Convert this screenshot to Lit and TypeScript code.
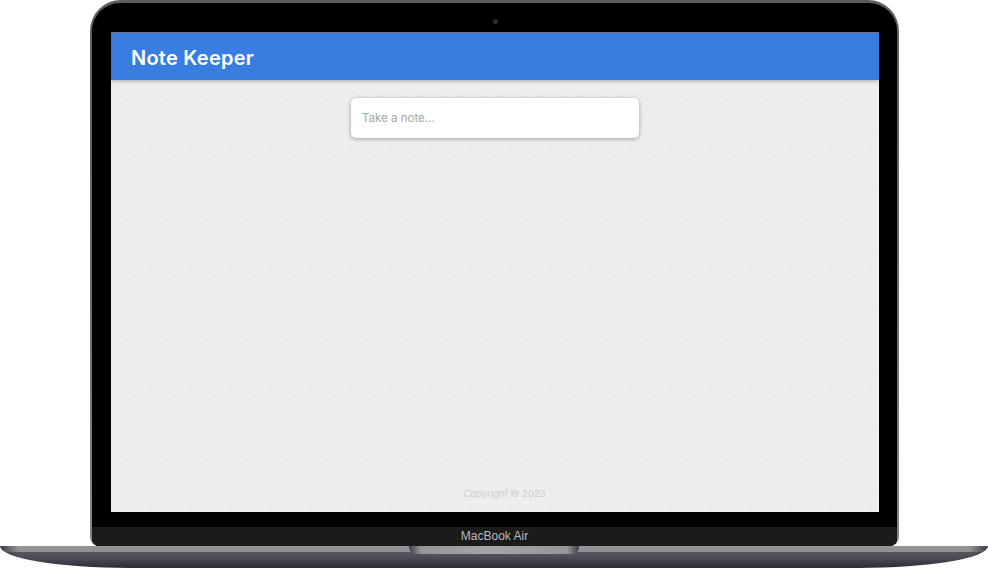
import { LitElement, html, css, unsafeCSS } from "lit";
import { customElement } from "lit/decorators.js";

const tile = `<svg xmlns='http://www.w3.org/2000/svg' width='40' height='60'><g fill='none' stroke-width='1'><path stroke='#e8e8e8' d='M20 3.5L40 10.5L20 18L0 10.5ZM0 33.5L-20 40.5L0 48L20 40.5ZM40 33.5L20 40.5L40 48L60 40.5ZM20 63.5L0 70.5M20 63.5L40 70.5'/><path stroke='#e9e9e9' d='M.5 10.5V33.5M.5 48V70M20.5 18V63.5M40.5 10.5V33.5M40.5 48V70'/></g></svg>`;

@customElement("app-root")
export class AppRoot extends LitElement {
  static styles = css`
    :host {
      display: block;
      width: 988px;
      height: 568px;
      background: #fff;
      overflow: hidden;
    }
    .laptop {
      display: flex;
      flex-direction: column;
      height: 568px;
    }
    .lid {
      box-sizing: border-box;
      width: 809px;
      height: 546px;
      margin: 0 auto 0 90px;
      padding: 3px 2px 0;
      border-radius: 31px 31px 9px 9px;
      background: linear-gradient(180deg, #5c5c62 0%, #6a6a70 50%, #85858a 100%);
      display: flex;
    }
    .bezel {
      flex: 1;
      background: #000;
      border-radius: 28px 28px 7px 7px;
      display: flex;
      flex-direction: column;
      overflow: hidden;
    }
    .cam-row {
      height: 29px;
      margin: 0 18px 0 19px;
      display: flex;
      align-items: center;
      justify-content: center;
      padding-top: 8px;
      box-sizing: border-box;
    }
    .cam {
      width: 5px;
      height: 5px;
      border-radius: 50%;
      background: #2a2a2c;
    }
    .screen {
      height: 480px;
      margin: 0 18px 0 19px;
      display: flex;
      flex-direction: column;
      background-color: #eeeeee;
      background-image: url("data:image/svg+xml,${unsafeCSS(encodeURIComponent(tile))}");
      background-position: 19px -3px;
    }
    .header {
      height: 48px;
      box-sizing: border-box;
      border-top: 1px solid #6b7484;
      background: #3a7de0;
      box-shadow: 0 1px 4px rgba(0, 0, 0, 0.3);
      display: flex;
      align-items: center;
      padding: 2px 0 0 20px;
    }
    .title {
      font-family: "Inter", sans-serif;
      font-size: 20px;
      font-weight: 600;
      letter-spacing: 0.25px;
      color: #fff;
    }
    .main {
      flex: 1;
      padding-top: 18px;
      display: flex;
      justify-content: center;
      align-items: flex-start;
    }
    .note {
      width: 288px;
      height: 40px;
      box-sizing: border-box;
      padding: 0 11px;
      display: flex;
      align-items: center;
      background: #fff;
      border-radius: 5px;
      box-shadow: 0 1px 4px rgba(0, 0, 0, 0.35);
      font-family: "Inter", sans-serif;
      font-size: 11.5px;
      color: #a3a3a3;
    }
    .footer {
      height: 37px;
      padding-left: 19px;
      text-align: center;
      font-family: "Inter", sans-serif;
      font-size: 9.6px;
      color: #cdcdcd;
      line-height: 38px;
    }
    .chin {
      height: 15px;
    }
    .label {
      height: 19px;
      background: #1b1b1c;
      color: #b9b9bb;
      font-family: "Liberation Sans", sans-serif;
      font-size: 12px;
      line-height: 19px;
      text-align: center;
    }
    .base {
      height: 22px;
      border-radius: 0 0 130px 130px / 0 0 22px 22px;
      background:
        linear-gradient(90deg, #3a3b42 0, rgba(58, 59, 66, 0) 18px, rgba(58, 59, 66, 0) 970px, #3a3b42 988px),
        linear-gradient(
          180deg,
          #95959a 0%,
          #8e8e93 26%,
          #55565f 29%,
          #4a4b55 55%,
          #2b2c38 100%
        );
      display: flex;
      justify-content: center;
    }
    .notch {
      width: 170px;
      height: 8px;
      border-radius: 0 0 7px 7px;
      background: linear-gradient(
        90deg,
        #3d3e45 0%,
        #96969a 7%,
        #a6a6aa 50%,
        #96969a 93%,
        #3d3e45 100%
      );
    }
  `;

  render() {
    return html`
      <div class="laptop">
        <div class="lid">
          <div class="bezel">
            <div class="cam-row"><div class="cam"></div></div>
            <div class="screen">
              <div class="header"><div class="title">Note Keeper</div></div>
              <div class="main"><div class="note">Take a note...</div></div>
              <div class="footer">Copyright © 2023</div>
            </div>
            <div class="chin"></div>
            <div class="label">MacBook Air</div>
          </div>
        </div>
        <div class="base"><div class="notch"></div></div>
      </div>
    `;
  }
}
